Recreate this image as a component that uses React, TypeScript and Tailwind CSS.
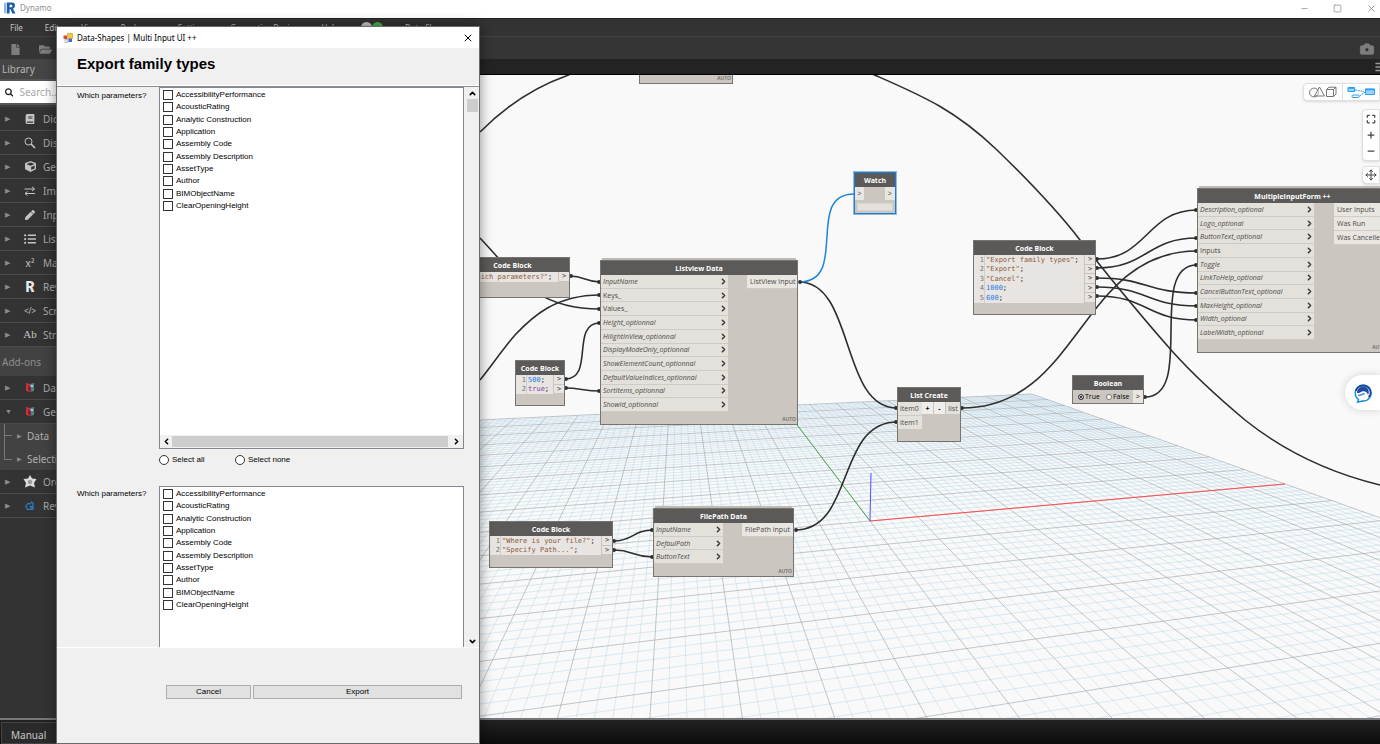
import React from "react";
import { Camera, ChevronDown, ChevronLeft, ChevronRight, ChevronUp, Maximize, Menu, Minus, Move, Plus, Square, X } from "lucide-react";
import { FaBook, FaCube, FaFile, FaFolderOpen, FaListUl, FaPen, FaSearch } from "react-icons/fa";

const PARAMETERS = [
  "AccessibilityPerformance",
  "AcousticRating",
  "Analytic Construction",
  "Application",
  "Assembly Code",
  "Assembly Description",
  "AssetType",
  "Author",
  "BIMObjectName",
  "ClearOpeningHeight",
];

/* ---------- perspective ground grid ---------- */

type Pt = [number, number];

const weight = (u: number, v: number) => 1 + 0.172 * u + 0.838 * v;

function project(u: number, v: number): Pt {
  const w = weight(u, v);
  return [(870 + 636 * u + 568.2 * v) / w, (521 + 46.2 * u + 224.7 * v) / w];
}

function gridLine(u0: number, v0: number, u1: number, v1: number): string {
  const near = 0.3;
  const w0 = weight(u0, v0);
  const w1 = weight(u1, v1);
  if (w0 < near && w1 < near) return "";
  let su = u0;
  let sv = v0;
  if (w0 < near) {
    const t = (near - w0) / (w1 - w0);
    su = u0 + (u1 - u0) * t;
    sv = v0 + (v1 - v0) * t;
  }
  const a = project(su, sv);
  const b = project(u1, v1);
  return `M${a[0].toFixed(1)} ${a[1].toFixed(1)}L${b[0].toFixed(1)} ${b[1].toFixed(1)}`;
}

function buildGrid() {
  let minor = "";
  let major = "";
  for (let i = -50; i <= 50; i++) {
    const k = i / 50;
    const d = gridLine(-1, k, 1, k) + gridLine(k, -1, k, 1);
    if (i % 5 === 0) major += d;
    else minor += d;
  }
  return { minor, major };
}

const GRID = buildGrid();

const WIRES = [
  "M480 132C505 107 535 87 566 76L580 70",
  "M870 73C920 95 953 108 997 150C1028 180 1056 209 1080 240C1110 278 1140 315 1172 351C1197 379 1220 399 1245 420C1290 456 1335 474 1380 485",
  "M480 238C515 275 535 309 600 309",
  "M600 295C555 295 532 317 515 335C503 349 492 365 480 380",
  "M570 276C584 276 586 282 600 282",
  "M565 379C595 379 570 323 600 323",
  "M565 388C580 388 584 391 600 391",
  "M799 282C855 282 840 408 897 408",
  "M795 530C855 530 836 422 897 422",
  "M962 408C1080 408 1080 251 1197 251",
  "M1097 259C1147 259 1147 210 1197 210",
  "M1097 268C1147 268 1147 238 1197 238",
  "M1097 278C1147 278 1147 293 1197 293",
  "M1097 287C1147 287 1147 306 1197 306",
  "M1097 296C1147 296 1147 320 1197 320",
  "M1145 397C1196 397 1146 265 1197 265",
  "M614 541C633 541 633 530 653 530",
  "M614 550C633 550 633 557 653 557",
];

const PORTS: Pt[] = [
  [571, 276], [599, 282], [599, 295], [599, 309], [599, 323], [599, 391], [566, 379], [566, 388],
  [800, 282], [896, 408], [896, 422], [796, 530], [962, 408], [1097, 259], [1097, 268], [1097, 278],
  [1097, 287], [1097, 296], [1196, 210], [1196, 238], [1196, 251], [1196, 265], [1196, 293],
  [1196, 306], [1196, 320], [1145, 397], [614, 541], [614, 550], [652, 530], [652, 557],
];

/* ---------- graph nodes ---------- */

function NodeFrame({ x, y, w, h, title, tab, selected, children }: {
  x: number; y: number; w: number; h: number; title?: string; tab?: boolean; selected?: boolean; children?: React.ReactNode;
}) {
  return (
    <section className="absolute" style={{ left: x, top: y, width: w, height: h }}>
      {tab && <div className="absolute inset-x-[2px] -top-[2px] h-[2px] bg-[#bdbab5]" />}
      <div className={"flex h-full flex-col border bg-[#cbc6bf] " + (selected ? "border-[#1f7bd0] outline outline-1 outline-[#1f7bd0]/50" : "border-[#77736e]")}>
        {title && (
          <h3 className="flex h-[14px] shrink-0 items-center justify-center bg-[#5c5a58] text-[7px] leading-none font-bold text-white">
            {title}
          </h3>
        )}
        {children}
      </div>
    </section>
  );
}

function PackageNode({ x, y, w, h, title, inputs, outputs, plain = [], inW, outW, rowsH }: {
  x: number; y: number; w: number; h: number; title: string; inputs: string[]; outputs: string[]; plain?: string[]; inW: number; outW: number; rowsH: number;
}) {
  return (
    <NodeFrame x={x} y={y} w={w} h={h} title={title} tab>
      <div className="flex justify-between text-[7px] leading-none text-[#4b4947]">
        <ul className="flex flex-col" style={{ width: inW, height: rowsH }}>
          {inputs.map((name) => (
            <li key={name} className="flex flex-1 items-center justify-between border-b border-[#cfcbc5] bg-[#e4e1dc] pl-[2px]">
              <span className={plain.includes(name) ? "" : "italic"}>{name}</span>
              <ChevronRight size={9} strokeWidth={4} className="text-[#3a3836]" />
            </li>
          ))}
        </ul>
        <ul style={{ width: outW }}>
          {outputs.map((name) => (
            <li key={name} className="flex h-[14px] items-center overflow-hidden border-b border-[#cfcbc5] bg-[#e9e6e2] pl-[3px] whitespace-nowrap">
              {name}
            </li>
          ))}
        </ul>
      </div>
      <div className="mt-auto pr-px pb-[2px] text-right text-[5px] leading-none font-semibold text-[#6a6763]">AUTO</div>
    </NodeFrame>
  );
}

type Token = { t: string; c: "str" | "num" | "key" };

function CodeNode({ x, y, w, h, lines }: { x: number; y: number; w: number; h: number; lines: Token[] }) {
  const colors = { str: "text-[#8a5a3c]", num: "text-[#2c7fe0]", key: "text-[#7a45a8]" };
  return (
    <NodeFrame x={x} y={y} w={w} h={h} title="Code Block">
      <ol className="bg-[#e8e4e1] font-['DejaVu_Sans_Mono',monospace] text-[7px] leading-none">
        {lines.map((l, i) => (
          <li key={l.t} className={"flex items-stretch " + (i % 2 ? "h-[9px]" : "h-[10px]")}>
            <span className="flex w-[11px] items-center justify-end border-r border-[#d2cdc8] text-[#77736f]">{i + 1}</span>
            <span className="flex flex-1 items-center pl-px whitespace-pre text-[#222]">
              <span className={colors[l.c]}>{l.t}</span>;
            </span>
            <span className="flex w-[11px] items-center justify-center border-b border-l border-[#c9c4be] text-[#333]">&gt;</span>
          </li>
        ))}
      </ol>
    </NodeFrame>
  );
}

function Workspace() {
  return (
    <main className="relative min-w-0 flex-1 overflow-hidden bg-[#f9f9f9] font-['Open_Sans','Noto_Sans',sans-serif]">
      <div className="absolute -top-[75px] -left-[240px] h-[900px] w-[2000px]">
        <svg className="absolute inset-0 h-full w-full" fill="none">
          <path d={GRID.minor} stroke="#a9cfe3" strokeOpacity="0.5" strokeWidth="0.8" />
          <path d={GRID.major} stroke="#93a3ab" strokeOpacity="0.65" strokeWidth="0.9" />
          <path d="M870 521L782.5 405.7" stroke="#4aa84f" />
          <path d="M870 521L1285 484" stroke="#ff4d4d" />
          <path d="M870 521L871 473" stroke="#5050ff" />
          <g stroke="#2d2d2d" strokeWidth="1.6">
            {WIRES.map((d) => (
              <path key={d} d={d} />
            ))}
          </g>
          <path d="M799 282C850 282 804 194 854 194" stroke="#1f84dc" strokeWidth="1.5" />
          <g fill="#2d2d2d">
            {PORTS.map(([cx, cy]) => (
              <circle key={cx + "-" + cy} cx={cx} cy={cy} r="1.9" />
            ))}
          </g>
        </svg>

        <NodeFrame x={639} y={50} w={94} h={34}>
          <div className="mt-auto pr-px pb-[2px] text-right text-[5px] leading-none font-semibold text-[#6a6763]">AUTO</div>
        </NodeFrame>

        <CodeNode x={455} y={257} w={115} h={41} lines={[{ t: '"Which parameters?"', c: "str" }]} />
        <CodeNode x={515} y={360} w={50} h={46} lines={[{ t: "500", c: "num" }, { t: "true", c: "key" }]} />
        <CodeNode x={489} y={521} w={124} h={47} lines={[{ t: '"Where is your file?"', c: "str" }, { t: '"Specify Path..."', c: "str" }]} />
        <CodeNode
          x={973}
          y={240}
          w={123}
          h={75}
          lines={[
            { t: '"Export family types"', c: "str" },
            { t: '"Export"', c: "str" },
            { t: '"Cancel"', c: "str" },
            { t: "1000", c: "num" },
            { t: "600", c: "num" },
          ]}
        />

        <PackageNode
          x={600} y={260} w={198} h={165} title="Listview Data" inW={127} outW={50} rowsH={137}
          inputs={["InputName", "Keys_", "Values_", "Height_optionnal", "HilightInView_optionnal", "DisplayModeOnly_optionnal", "ShowElementCount_optionnal", "DefaultValueIndices_optionnal", "SortItems_optionnal", "ShowId_optionnal"]}
          plain={["Keys_", "Values_"]}
          outputs={["ListView input"]}
        />
        <PackageNode
          x={653} y={508} w={141} h={69} title="FilePath Data" inW={69} outW={51} rowsH={41}
          inputs={["InputName", "DefaulPath", "ButtonText"]}
          outputs={["FilePath input"]}
        />
        <PackageNode
          x={1197} y={188} w={191} h={165} title="MultipleInputForm ++" inW={116} outW={53} rowsH={137}
          inputs={["Description_optional", "Logo_optional", "ButtonText_optional", "Inputs", "Toggle", "LinkToHelp_optional", "CancelButtonText_optional", "MaxHeight_optional", "Width_optional", "LabelWidth_optional"]}
          plain={["Inputs"]}
          outputs={["User Inputs", "Was Run", "Was Cancelled"]}
        />

        <NodeFrame x={897} y={387} w={64} h={55} title="List Create">
          <div className="flex justify-between text-[7px] leading-none text-[#4b4947]">
            <div className="w-[24px]">
              <div className="flex h-[14px] items-center border-b border-[#cfcbc5] bg-[#e4e1dc] pl-[2px]">item0</div>
              <div className="flex h-[13px] items-center bg-[#e4e1dc] pl-[2px]">item1</div>
            </div>
            <div className="flex h-[12px] gap-px">
              <button className="w-[11px] bg-[#efedea] font-bold text-black">+</button>
              <button className="w-[11px] bg-[#efedea] font-bold text-black">-</button>
              <span className="flex w-[14px] items-center justify-center bg-[#e4e1dc]">list</span>
            </div>
          </div>
        </NodeFrame>

        <NodeFrame x={854} y={172} w={42} h={42} title="Watch" selected>
          <div className="flex justify-between text-[7px] leading-none text-[#333]">
            <span className="flex h-[13px] w-[9px] items-center justify-center bg-[#e9e6e2]">&gt;</span>
            <span className="flex h-[13px] w-[10px] items-center justify-center bg-[#e9e6e2]">&gt;</span>
          </div>
          <div className="mx-[2px] mt-auto mb-[2px] h-[8px] border border-[#d8d4cf] bg-[#e4e1dc]" />
        </NodeFrame>

        <NodeFrame x={1072} y={375} w={72} h={29} title="Boolean">
          <div className="flex flex-1 items-center text-[7px] leading-none text-black">
            <label className="flex flex-1 items-center gap-px pl-[5px]">
              <input type="radio" name="boolean" defaultChecked className="h-[6px] w-[6px] appearance-none rounded-full border border-[#444] bg-white checked:bg-black checked:shadow-[inset_0_0_0_1px_white]" />
              True
            </label>
            <label className="flex flex-1 items-center gap-px pl-px">
              <input type="radio" name="boolean" className="h-[6px] w-[6px] appearance-none rounded-full border border-[#777] bg-white" />
              False
            </label>
            <span className="flex w-[10px] items-center justify-center self-stretch bg-[#e9e6e2]">&gt;</span>
          </div>
        </NodeFrame>
      </div>

      <div className="absolute top-[8px] right-0 flex h-[18px] w-[77px] rounded-l-sm border border-[#e0e0e0] bg-white shadow-sm">
        <button aria-label="Geometry view" className="flex w-[39px] items-center justify-center border-r border-[#e0e0e0]">
          <svg width="28" height="12" viewBox="0 0 28 12" fill="none" stroke="#666" strokeWidth="0.9">
            <circle cx="5" cy="6.5" r="4.4" />
            <path d="M5.5 10L10.5 1L15.5 10Z" fill="#fff" fillOpacity="0.4" />
            <path d="M17.5 3.5H24.5V10.5H17.5ZM17.5 3.5L20 1.2H27V8L24.5 10.5M24.5 3.5L27 1.2" />
          </svg>
        </button>
        <button aria-label="Graph view" className="flex flex-1 items-center justify-center">
          <svg width="28" height="12" viewBox="0 0 28 12" fill="none" stroke="#2a9df4" strokeWidth="1">
            <path d="M1 1.5H7.500V5.500H1ZM18.500 3H27.500V8.500H18.500Z" fill="#9fd2fa" />
            <path d="M18.500 3.500H27.500M1 2H7.500" strokeWidth="1.400" />
            <rect x="5" y="9" width="7" height="2.500" rx="1" />
            <path d="M8 4L17 5.500M12.500 10L18 6" strokeDasharray="2 0.800" />
          </svg>
        </button>
      </div>
      <div className="absolute top-[34px] right-0 flex h-[52px] w-[18px] flex-col items-center justify-between rounded-l-sm border border-[#e0e0e0] bg-white py-[4px] text-[#444] shadow-sm">
        <button aria-label="Zoom to fit"><Maximize size={10} strokeWidth={3} /></button>
        <button aria-label="Zoom in"><Plus size={10} strokeWidth={3} /></button>
        <button aria-label="Zoom out"><Minus size={10} strokeWidth={3} /></button>
      </div>
      <button aria-label="Pan" className="absolute top-[91px] right-0 flex h-[18px] w-[18px] items-center justify-center rounded-l-sm border border-[#e0e0e0] bg-white text-[#444] shadow-sm">
        <Move size={12} strokeWidth={2} />
      </button>
      <button aria-label="Chat" className="absolute top-[300px] right-0 flex h-[35px] w-[35px] items-center justify-center rounded-l-full bg-white shadow-[0_0_8px_rgba(0,0,0,0.16)]">
        <svg width="20" height="20" viewBox="0 0 20 20" fill="none">
          <path d="M5.500 16.500A8 8 0 1 1 10 18L4.500 19Z" fill="#fff" stroke="#148bd4" strokeWidth="1.400" />
          <path d="M3 8A7.500 7.500 0 0 1 17 7C18 10 17 13 15.500 14" stroke="#1d3f96" strokeWidth="1.600" />
          <path d="M4 10C4 5 9 2.500 12.500 4C16 5.500 16.500 9.500 15 12C14.500 9 11.500 7.500 9 8.500C7 9 6.500 10.500 4 10Z" fill="#1e4ba6" />
          <path d="M5 12C8 13.500 9 10 12 11" stroke="#2a7fd0" strokeWidth="1.200" />
        </svg>
      </button>
    </main>
  );
}

/* ---------- library sidebar ---------- */

function DataShapesMark() {
  return (
    <svg width="10" height="11" viewBox="0 0 10 11">
      <path d="M1 1L5 2V10L1 9Z" fill="#c8323c" />
      <path d="M5 2L9 1V9L5 10Z" fill="#5d7d8c" />
      <path d="M3 3L6 6V10L3 8Z" fill="#7c2230" />
      <path d="M6 3H8V5H6Z" fill="#9fd0e0" />
      <path d="M7 6H9V8H7Z" fill="#4a8f5b" />
    </svg>
  );
}

function LibraryRow({ label, icon, open }: { label: string; icon: React.ReactNode; open?: boolean }) {
  return (
    <li className="flex h-[24px] items-center border-b border-[#4b4b4b] bg-[#333] text-[10px] text-[#a9a9a9]">
      <span className="w-[22px] pl-[5px] text-[7px] text-[#8a8a8a]">{open ? "▼" : "▶"}</span>
      <span className="flex w-[16px] items-center justify-center text-[#c4c4c4]">{icon}</span>
      <span className="pl-[5px]">{label}</span>
    </li>
  );
}

function Library() {
  return (
    <aside className="flex w-[240px] shrink-0 flex-col bg-[#333] font-['Noto_Sans','Open_Sans',sans-serif]">
      <h2 className="flex h-[20px] items-center bg-[#454545] pl-[2px] text-[10px] text-[#b5b5b5]">Library</h2>
      <div className="bg-[#555] py-[2px]">
        <label className="flex h-[22px] items-center gap-[6px] bg-white pl-[5px] text-[#222]">
          <FaSearch size={9} />
          <input aria-label="Search" placeholder="Search..." className="w-full text-[10px] outline-none placeholder:text-[#a8a8a8]" />
        </label>
      </div>
      <ul className="border-t-2 border-[#3f3f3f]">
        <LibraryRow label="Dictionary" icon={<FaBook size={10} />} />
        <LibraryRow label="Display" icon={<svg width="12" height="12" viewBox="0 0 12 12" fill="none" stroke="currentColor"><circle cx="4.500" cy="4.500" r="3.500" /><path d="M7 7L11 11" strokeWidth="1.700" /></svg>} />
        <LibraryRow label="Geometry" icon={<FaCube size={11} />} />
        <LibraryRow label="ImportExport" icon={<svg width="12" height="10" viewBox="0 0 12 10" fill="none" stroke="currentColor"><path d="M0.500 3H10.500M8 0.800L10.500 3L8 5M11 7.500H1M3.500 5.500L1 7.500L3.500 9.500" /></svg>} />
        <LibraryRow label="Input" icon={<FaPen size={10} />} />
        <LibraryRow label="List" icon={<FaListUl size={12} />} />
        <LibraryRow label="Math" icon={<span className="font-['Noto_Sans'] text-[10px] leading-none">x²</span>} />
        <LibraryRow label="Revit" icon={<span className="font-['Roboto'] text-[14px] leading-none font-black text-[#e8e8e8]">R</span>} />
        <LibraryRow label="Script" icon={<span className="text-[8px] leading-none">&lt;/&gt;</span>} />
        <LibraryRow label="String" icon={<span className="font-['Liberation_Serif',serif] text-[11px] leading-none">Ab</span>} />
      </ul>
      <h3 className="flex h-[29px] items-center bg-[#424242] pl-[2px] text-[10px] text-[#8f8f8f]">Add-ons</h3>
      <ul>
        <LibraryRow label="Data-Shapes" icon={<DataShapesMark />} />
        <LibraryRow label="Generative Design" icon={<DataShapesMark />} open />
        <li className="flex h-[46px] bg-[#424242] pl-[4px]">
          <svg width="10" height="46" fill="none" stroke="#777"><path d="M0.500 0V35.500M0 11.500H8M0 35.500H8" /></svg>
          <ul className="flex-1 text-[10px] text-[#b0b0b0]">
            <li className="flex h-[23px] items-center"><span className="w-[13px] pl-[3px] text-[6px] text-[#8a8a8a]">▶</span>Data</li>
            <li className="flex h-[23px] items-center"><span className="w-[13px] pl-[3px] text-[6px] text-[#8a8a8a]">▶</span>Selection</li>
          </ul>
        </li>
        <LibraryRow label="Orchid" icon={<svg width="14" height="13" viewBox="0 0 14 13"><path d="M7 0L9 3.500L13.500 4L11 8L12 12.500L7 10.500L2 12.500L3 8L0.500 4L5 3.500Z" fill="#dcdcdc" /><circle cx="7" cy="7" r="2.200" fill="#9a9a9a" /></svg>} />
        <LibraryRow label="Revit" icon={<svg width="10" height="10" viewBox="0 0 10 10" fill="none" stroke="#2f7fc4" strokeWidth="1.200"><path d="M2.500 8.500L1 5L3 2.500L5 3L6.500 1L8 2V8.500H5L7 5.500H4.500M2 8.500H8.500" /></svg>} />
      </ul>
    </aside>
  );
}

/* ---------- dialog ---------- */

function ParameterList({ group }: { group: string }) {
  return (
    <ul className="flex h-[124px] shrink-0 flex-col pt-px pl-[3px]">
      {PARAMETERS.map((name) => (
        <li key={name} className="flex flex-1 items-center">
          <label className="flex items-center gap-[3px]">
            <input type="checkbox" name={group} className="h-[10px] w-[10px] appearance-none border border-[#333] bg-white checked:bg-[#333]" />
            {name}
          </label>
        </li>
      ))}
    </ul>
  );
}

function Dialog() {
  return (
    <div role="dialog" aria-label="Data-Shapes | Multi Input UI ++" className="absolute top-[26px] bottom-0 left-[56px] flex w-[424px] flex-col border border-[#6a6a6a] bg-[#f0f0f0] font-['Liberation_Sans',Arial,sans-serif] text-[8px] leading-none text-black shadow-[0_0_12px_rgba(0,0,0,0.45)]">
      <header className="flex h-[21px] shrink-0 items-center bg-white pr-[5px] pl-[6px]">
        <svg width="10" height="10" viewBox="0 0 10 10">
          <path d="M4.500 0.500H9.500V5.500H4.500Z" fill="#f6c945" stroke="#c98f14" strokeWidth="0.600" />
          <path d="M0.500 2.500H4V6H0.500Z" fill="#d64b3c" />
          <path d="M2 6.500H5V9.500H2Z" fill="#e9e9e9" stroke="#888" strokeWidth="0.500" />
          <path d="M5.500 5.500H9V9H5.500Z" fill="#3a6fd0" />
        </svg>
        <span className="pl-[4px] font-['Noto_Sans','Open_Sans',sans-serif] text-[8px]">Data-Shapes | Multi Input UI ++</span>
        <button aria-label="Close" className="ml-auto"><X size={12} strokeWidth={2} /></button>
      </header>
      <h1 className="flex h-[38px] shrink-0 items-center border-b border-white pb-[7px] pl-[20px] text-[15px] font-bold">Export family types</h1>
      <div className="flex min-h-0 flex-1 border-t border-b border-t-[#8a8d93] border-b-white">
        <div className="flex min-h-0 flex-col overflow-hidden">
          <div role="group" aria-labelledby="first-label" className="flex h-[362px] shrink-0">
            <div id="first-label" className="w-[102px] pt-[5px] pl-[20px] whitespace-nowrap">Which parameters?</div>
            <div className="flex w-[305px] flex-col border border-[#828790] bg-white">
              <ParameterList group="first" />
              <div className="mt-auto flex h-[13px] items-center justify-between bg-[#f0f0f0] px-[2px]">
                <button aria-label="Scroll left"><ChevronLeft size={9} strokeWidth={4} /></button>
                <div className="mx-px h-[11px] flex-1 bg-[#cdcdcd]" />
                <button aria-label="Scroll right" className="pl-[3px]"><ChevronRight size={9} strokeWidth={4} /></button>
              </div>
            </div>
          </div>
          <div className="flex h-[37px] shrink-0 pt-[6px] pl-[102px]">
            <label className="flex h-[10px] w-[76px] items-center gap-[3px]">
              <input type="radio" name="select" className="h-[10px] w-[10px] appearance-none rounded-full border border-[#333] bg-white" />
              Select all
            </label>
            <label className="flex h-[10px] items-center gap-[3px]">
              <input type="radio" name="select" className="h-[10px] w-[10px] appearance-none rounded-full border border-[#333] bg-white" />
              Select none
            </label>
          </div>
          <div role="group" aria-labelledby="second-label" className="flex min-h-0 flex-1">
            <div id="second-label" className="w-[102px] pt-[4px] pl-[20px] whitespace-nowrap">Which parameters?</div>
            <div className="flex w-[305px] flex-col border-x border-t border-[#828790] bg-white">
              <ParameterList group="second" />
            </div>
          </div>
        </div>
        <div className="ml-auto flex w-[13px] flex-col items-center pt-px">
          <button aria-label="Scroll up" className="h-[11px]"><ChevronUp size={9} strokeWidth={4} /></button>
          <div className="h-[13px] w-[11px] bg-[#cdcdcd]" />
          <button aria-label="Scroll down" className="mt-auto h-[11px]"><ChevronDown size={9} strokeWidth={4} /></button>
        </div>
      </div>
      <footer className="flex h-[95px] shrink-0 items-start gap-[2px] pt-[37px] pl-[109px]">
        <button className="h-[14px] w-[85px] border border-[#adadad] bg-[#e1e1e1]">Cancel</button>
        <button className="h-[14px] w-[209px] border border-[#adadad] bg-[#e1e1e1]">Export</button>
      </footer>
    </div>
  );
}

export default function App() {
  return (
    <div className="relative flex min-h-screen flex-col bg-[#333] font-['Noto_Sans','Open_Sans',sans-serif] leading-none">
      <header className="flex h-[19px] items-center border-b border-[#222] bg-white pb-[2px] text-[#8f8f8f]">
        <svg className="ml-[4px]" width="12" height="12" viewBox="0 0 12 12">
          <path d="M0 1.500L2.500 0V12L0 10.500Z" fill="#8fb6de" />
          <path d="M3 0.500H8Q11 0.500 11 3.800Q11 6 9 6.800L11.500 11.500H8.300L6.500 7.300H5.600V11.500H3ZM5.600 2.700V5.200H7.200Q8.400 5.200 8.400 3.900Q8.400 2.700 7.200 2.700Z" fill="#1a5da8" fillRule="evenodd" />
        </svg>
        <span className="pl-[4px] text-[8px]">Dynamo</span>
        <div className="ml-auto flex items-center gap-[24px] pr-[3px]">
          <button aria-label="Minimize"><Minus size={9} strokeWidth={2} /></button>
          <button aria-label="Maximize"><Square size={9} strokeWidth={2} /></button>
          <button aria-label="Close window"><X size={11} strokeWidth={2} /></button>
        </div>
      </header>
      <nav className="flex h-[18px] items-center gap-[22px] border-b border-[#444] bg-[#333] pl-[10px] text-[8px] text-[#c4c4c4]">
        <span>File</span>
        <span>Edit</span>
        <span>View</span>
        <span>Packages</span>
        <span>Settings</span>
        <span>Generative Design</span>
        <span>Help</span>
        <span className="flex">
          <i className="h-[11px] w-[11px] rounded-full bg-[#c9c9c9]" />
          <i className="h-[11px] w-[11px] rounded-full bg-[#4caf50]" />
        </span>
        <span>Data-Shapes</span>
      </nav>
      <div className="flex h-[22px] items-center bg-[#353535] pt-[2px] pr-[5px] pl-[10px] text-[#7d7d7d]">
        <FaFile size={11} />
        <FaFolderOpen size={13} className="ml-[18px]" />
        <button aria-label="Export image" className="ml-auto"><Camera size={16} strokeWidth={1} className="fill-[#7d7d7d] [&>circle]:fill-[#333]" /></button>
      </div>
      <div className="flex flex-1">
        <Library />
        <div className="flex min-w-0 flex-1 flex-col">
          <div className="flex h-[16px] items-center justify-end overflow-hidden border-b border-black bg-[#232323] text-[#999]">
            <Menu size={12} strokeWidth={3} className="-mr-[6px]" />
          </div>
          <Workspace />
        </div>
      </div>
      <footer className="flex h-[26px] items-end border-t-2 border-[#777] bg-gradient-to-b from-[#222] to-[#0c0c0c]">
        <div className="ml-[1px] flex h-[22px] w-[180px] items-center border border-[#444] bg-[#2a2a2a] pt-[4px] pl-[9px] text-[10px] text-[#c8c8c8]">Manual</div>
      </footer>
      <Dialog />
    </div>
  );
}
